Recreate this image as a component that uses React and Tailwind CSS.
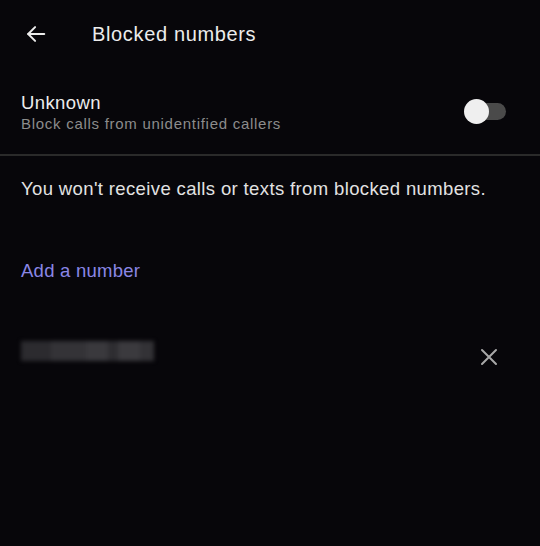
export default function App() {
  return (
    <div
      className="w-[540px] h-[546px] bg-[#07060a] text-[#e6e6e6] overflow-hidden"
      style={{ fontFamily: '"Liberation Sans", Arial, sans-serif' }}
    >
      {/* Top bar */}
      <div className="h-[68px] flex items-center pl-[25px]">
        <svg width="22" height="22" viewBox="0 0 24 24" fill="none" stroke="#ececec" strokeWidth="2.2" strokeLinecap="round" strokeLinejoin="round">
          <path d="M21 12H3.5" />
          <path d="M11 4.5L3.5 12L11 19.5" />
        </svg>
        <span className="ml-[45px] text-[20px] tracking-[0.65px] text-[#ececec] leading-none">Blocked numbers</span>
      </div>

      {/* Unknown callers row */}
      <div className="h-[86px] flex items-center justify-between pl-[21px] pr-[34px] pt-[3px]">
        <div className="flex flex-col">
          <span className="text-[18.5px] tracking-[0.4px] leading-[22px] text-[#ececec]">Unknown</span>
          <span className="text-[15px] tracking-[0.72px] leading-[20px] text-[#8c8c8c]">Block calls from unidentified callers</span>
        </div>
        <div className="relative w-[42px] h-[24px] flex items-center -mt-[3px]">
          <div className="w-[40px] h-[17px] rounded-full bg-[#4a4a4a] ml-[2px]" />
          <div className="absolute left-0 top-0 w-[25px] h-[25px] rounded-full bg-[#efefef]" />
        </div>
      </div>
      <div className="h-[2px] bg-[#2a2a2a]" />

      {/* Info text */}
      <div className="pl-[21px] pt-[21px] text-[18.5px] tracking-[0.37px] leading-[24px] text-[#e2e2e2]">
        You won't receive calls or texts from blocked numbers.
      </div>

      {/* Add action */}
      <div className="pl-[21px] pt-[58px] text-[18.5px] tracking-[0.25px] leading-[24px] text-[#8a86e6]">Add a number</div>

      {/* Blocked entry */}
      <div className="flex items-start justify-between pl-[21px] pr-[42px] mt-[58px]">
        <div className="flex h-[20px] blur-[2px]">
          <div className="w-[30px] bg-[#2c2b2f]" />
          <div className="w-[35px] bg-[#343337]" />
          <div className="w-[22px] bg-[#3a393d]" />
          <div className="w-[10px] bg-[#2e2d31]" />
          <div className="w-[22px] bg-[#3b3a3e]" />
          <div className="w-[14px] bg-[#333236]" />
        </div>
        <svg className="mt-[7px]" width="18" height="18" viewBox="0 0 18 18" stroke="#a8a8a8" strokeWidth="2" strokeLinecap="round">
          <path d="M2 2L16 16M16 2L2 16" />
        </svg>
      </div>
    </div>
  );
}
